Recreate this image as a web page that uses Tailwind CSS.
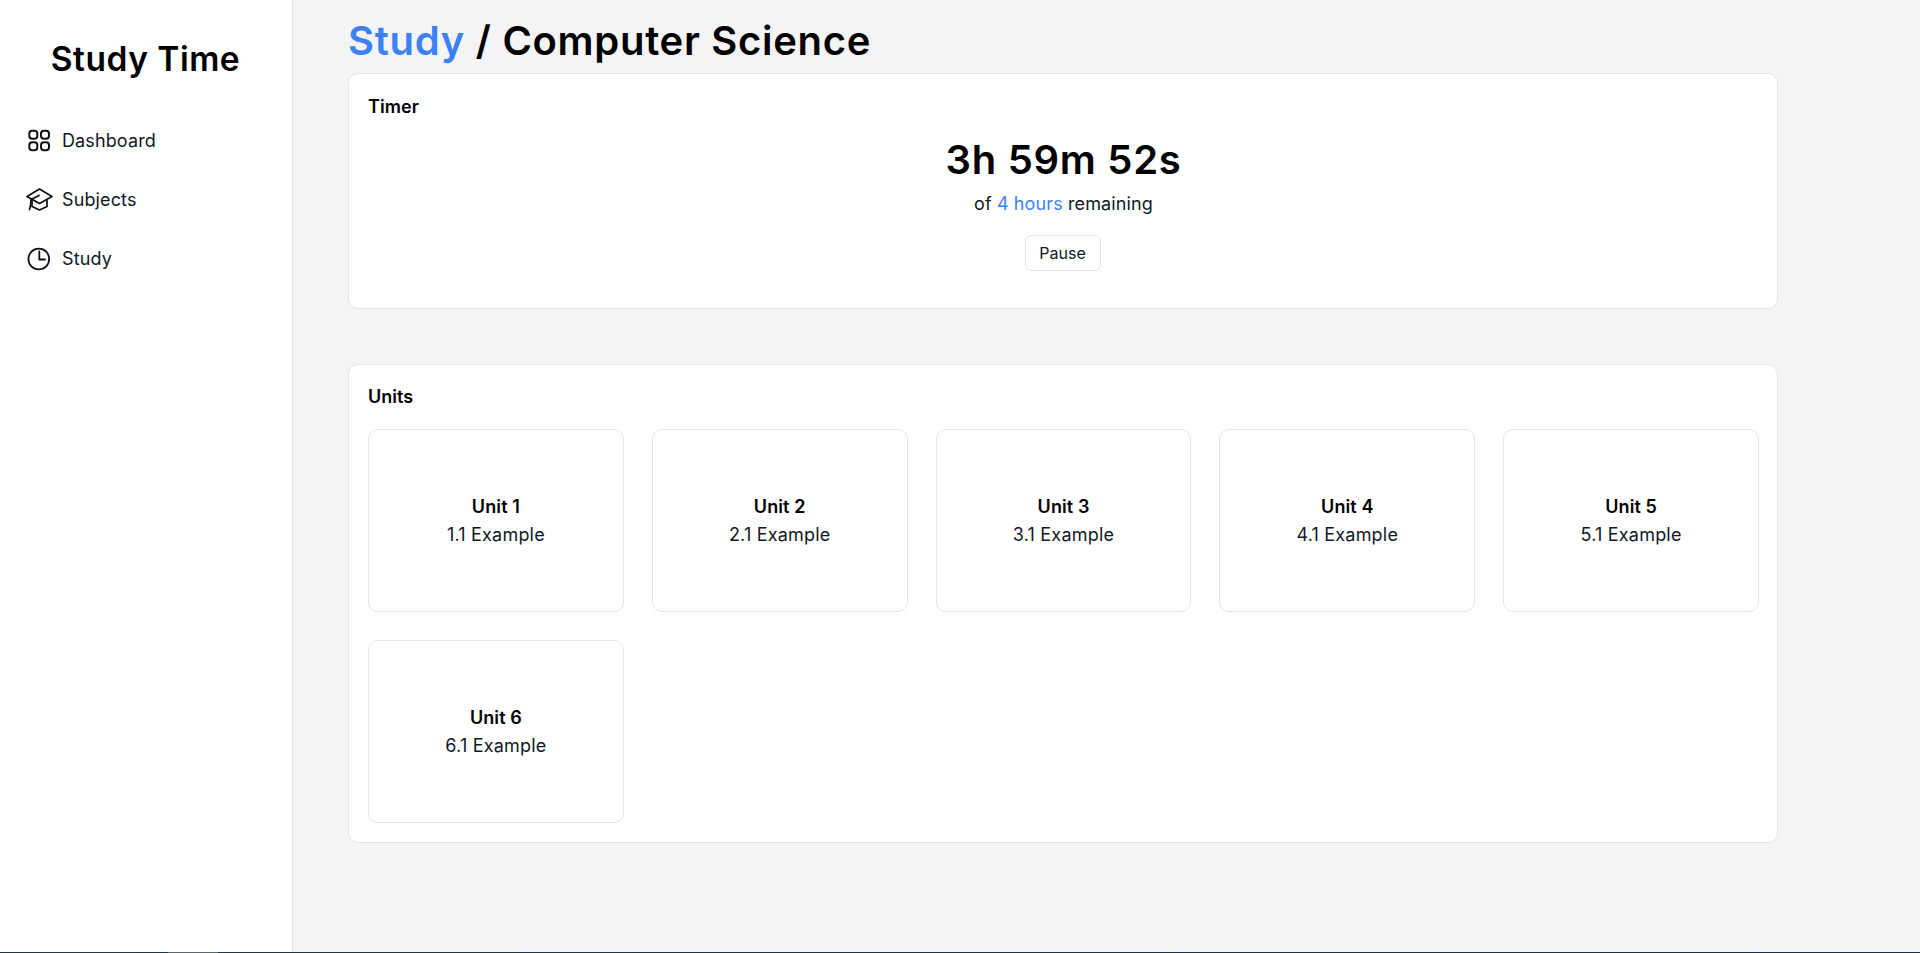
<!DOCTYPE html>
<html lang="en">
<head>
  <meta charset="UTF-8" />
  <meta name="viewport" content="width=device-width, initial-scale=1.0"/>
  <title>Study Time</title>
  <script src="https://cdn.jsdelivr.net/npm/@tailwindcss/browser@4"></script>
</head>
<body class="bg-[#f4f4f4] font-['Inter',sans-serif] text-black overflow-hidden">
  <div class="h-screen flex flex-col">
    <div class="flex flex-1 min-h-0">

      <!-- Sidebar -->
      <aside class="w-[293px] shrink-0 bg-white border-r border-[#e5e5e5] pt-[37px]">
        <h1 class="text-[33.5px] leading-[44px] font-semibold text-center tracking-[0.5px] pr-[1px]">Study Time</h1>
        <nav class="mt-[43px] pl-[26px] flex flex-col gap-[27.3px] text-[#111827] tracking-[0.12px]">
          <a class="flex items-center gap-[12px] h-[32px] text-[18px]">
            <svg class="w-[24px] h-[24px] overflow-visible" viewBox="0 0 24 24" fill="none" stroke="#111" stroke-width="2">
              <rect x="3.3" y="2.8" width="8" height="8" rx="3"/><rect x="15" y="2.8" width="8" height="8" rx="3"/>
              <rect x="3.3" y="14.2" width="8" height="8" rx="3"/><rect x="15" y="14.2" width="8" height="8" rx="3"/>
            </svg>
            Dashboard
          </a>
          <a class="flex items-center gap-[12px] h-[32px] text-[18px]">
            <svg class="w-[24px] h-[24px] overflow-visible" viewBox="0 0 24 24" fill="none" stroke="#111" stroke-width="1.7" stroke-linejoin="round" stroke-linecap="round">
              <path d="M13.5 2 1 9.5l12.5 7 12.5-7z"/>
              <path d="M6 12.5v7l7.5 3.5 7.5-3.5v-7"/>
              <path d="M13 8.5 5 12.5l-.5 6-1 4"/>
            </svg>
            Subjects
          </a>
          <a class="flex items-center gap-[12px] h-[32px] text-[18px]">
            <svg class="w-[24px] h-[24px] overflow-visible" viewBox="0 0 24 24" fill="none" stroke="#111" stroke-width="1.8" stroke-linecap="round" stroke-linejoin="round">
              <circle cx="12.8" cy="12" r="10.4"/><path d="M13.3 4.5v8h5.7"/>
            </svg>
            Study
          </a>
        </nav>
      </aside>

      <!-- Main -->
      <main class="flex-1 pl-[55px] pt-[16px]">
        <h2 class="text-[40px] leading-[50px] font-semibold h-[57px] tracking-[0.7px]"><span class="text-[#3b82f6]">Study</span> / Computer Science</h2>

        <section class="w-[1430px] h-[236px] bg-white border border-[#e5e5e5] rounded-[10px] pl-[19px] pr-[18px] pt-[21px]">
          <h3 class="text-[18px] leading-[24px] font-semibold tracking-[0.05px]">Timer</h3>
          <div class="flex flex-col items-center">
            <div class="text-[40px] leading-[56px] font-semibold tracking-[0.7px] mt-[13px]">3h 59m 52s</div>
            <p class="text-[18px] leading-[28px] text-[#111827] tracking-[0.12px] mt-[2px]">of <span class="text-[#3b82f6]">4 hours</span> remaining</p>
            <button class="mt-[17px] mr-[2px] h-[36px] w-[76px] border border-[#e5e5e5] rounded-[6px] text-[16px] text-[#111827]">Pause</button>
          </div>
        </section>

        <section class="w-[1430px] h-[479px] mt-[55px] bg-white border border-[#e5e5e5] rounded-[10px] pl-[19px] pr-[18px] pt-[20px]">
          <h3 class="text-[18px] leading-[24px] font-semibold tracking-[0.05px]">Units</h3>
          <div class="grid grid-cols-5 gap-x-[28px] gap-y-[28px] mt-[20px]">
            <div class="h-[183px] border border-[#e5e5e5] rounded-[10px] flex flex-col items-center justify-center">
              <div class="text-[18px] leading-[28px] font-semibold tracking-[0.1px]">Unit 1</div>
              <div class="text-[18px] leading-[28px] text-[#111827] tracking-[0.2px]">1.1 Example</div>
            </div>
            <div class="h-[183px] border border-[#e5e5e5] rounded-[10px] flex flex-col items-center justify-center">
              <div class="text-[18px] leading-[28px] font-semibold tracking-[0.1px]">Unit 2</div>
              <div class="text-[18px] leading-[28px] text-[#111827] tracking-[0.2px]">2.1 Example</div>
            </div>
            <div class="h-[183px] border border-[#e5e5e5] rounded-[10px] flex flex-col items-center justify-center">
              <div class="text-[18px] leading-[28px] font-semibold tracking-[0.1px]">Unit 3</div>
              <div class="text-[18px] leading-[28px] text-[#111827] tracking-[0.2px]">3.1 Example</div>
            </div>
            <div class="h-[183px] border border-[#e5e5e5] rounded-[10px] flex flex-col items-center justify-center">
              <div class="text-[18px] leading-[28px] font-semibold tracking-[0.1px]">Unit 4</div>
              <div class="text-[18px] leading-[28px] text-[#111827] tracking-[0.2px]">4.1 Example</div>
            </div>
            <div class="h-[183px] border border-[#e5e5e5] rounded-[10px] flex flex-col items-center justify-center">
              <div class="text-[18px] leading-[28px] font-semibold tracking-[0.1px]">Unit 5</div>
              <div class="text-[18px] leading-[28px] text-[#111827] tracking-[0.2px]">5.1 Example</div>
            </div>
            <div class="h-[183px] border border-[#e5e5e5] rounded-[10px] flex flex-col items-center justify-center">
              <div class="text-[18px] leading-[28px] font-semibold tracking-[0.1px]">Unit 6</div>
              <div class="text-[18px] leading-[28px] text-[#111827] tracking-[0.2px]">6.1 Example</div>
            </div>
          </div>
        </section>
      </main>
    </div>
    <!-- strip along the bottom edge -->
    <div class="h-px shrink-0 flex bg-linear-to-r from-[#22393c] to-[#1e2d42]">
      <div class="ml-[168px] w-[50px] bg-[#5a6568]"></div>
    </div>
  </div>
</body>
</html>
